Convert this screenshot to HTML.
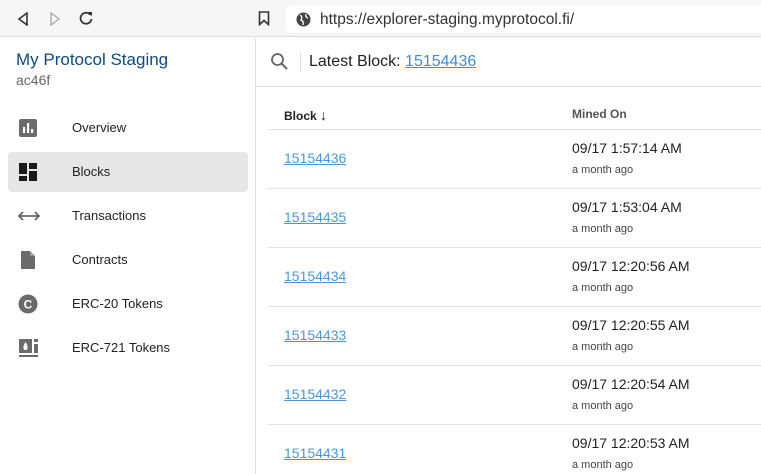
<!DOCTYPE html>
<html><head><meta charset="utf-8"><style>
*{box-sizing:border-box;margin:0;padding:0}
body{width:761px;height:474px;overflow:hidden;background:#fff;font-family:"Liberation Sans",sans-serif;position:relative;color:#222}
.bar{position:absolute;left:0;top:0;width:761px;height:37px;background:#f6f6f6;border-bottom:1px solid #dcdcdc}
.url{position:absolute;left:286px;top:5px;width:480px;height:28px;background:#fff;border-radius:6px}
.url span{position:absolute;left:34px;top:6px;font-size:15.5px;color:#333}
.side{position:absolute;left:0;top:38px;width:256px;height:436px;border-right:1px solid #e0e0e0}
.title{position:absolute;left:16px;top:12px;font-size:17px;color:#0e4a80}
.sub{position:absolute;left:16px;top:34px;font-size:14px;color:#666}
.nav{position:absolute;left:8px;width:240px;height:40px;border-radius:4px}
.nav.act{background:#e6e6e6}
.nav .t{position:absolute;left:64px;top:12px;font-size:13px;color:#222}
.nav svg{position:absolute;left:10px;top:10px}
.main{position:absolute;left:256px;top:38px;width:505px;height:436px}
.top{position:absolute;left:0;top:0;width:505px;height:49px;border-bottom:1px solid #e0e0e0}
.lb{position:absolute;left:53px;top:15px;font-size:16px;color:#222}
.lb a{color:#3d8ed6;text-decoration:underline}
.th{position:absolute;top:69px;font-size:12px;font-weight:bold;color:#222}
.line{position:absolute;left:12px;width:493px;height:1px;background:#e2e2e2}
.bn{position:absolute;left:28px;font-size:14px;color:#4a98db;text-decoration:underline}
.dt{position:absolute;left:316px;font-size:14px;color:#222}
.ago{position:absolute;left:316px;font-size:11px;color:#444}
</style></head><body>
<div class="bar">
<svg style="position:absolute;left:16px;top:12px" width="14" height="14"><path d="M11 1 L3 7 L11 13 Z" fill="none" stroke="#333" stroke-width="1.6"/></svg>
<svg style="position:absolute;left:48px;top:12px" width="14" height="14"><path d="M3 1 L11 7 L3 13 Z" fill="none" stroke="#aaa" stroke-width="1.4"/></svg>
<svg style="position:absolute;left:78px;top:10px" width="16" height="16"><path d="M12.5 5 A5.5 5.5 0 1 0 13.5 9" fill="none" stroke="#333" stroke-width="1.8"/><path d="M10 2 L14 2 L14 6 Z" fill="#333"/></svg>
<svg style="position:absolute;left:258px;top:11px" width="12" height="15"><path d="M1.5 1 H10.5 V13.5 L6 9.5 L1.5 13.5 Z" fill="none" stroke="#333" stroke-width="1.6"/></svg>
<div class="url"><svg style="position:absolute;left:10px;top:7px" width="15" height="15"><circle cx="7.5" cy="7.5" r="7" fill="#444"/><path d="M4 3 Q7 5 5 8 Q8 9 7 13 M10 2 Q9 5 12 6" stroke="#fff" stroke-width="1.3" fill="none"/></svg><span>https://explorer-staging.myprotocol.fi/</span></div>
</div>
<div class="side">
<div class="title">My Protocol Staging</div>
<div class="sub">ac46f</div>
<div class="nav" style="top:70px"><svg width="20" height="20"><rect x="1" y="1" width="18" height="18" rx="2" fill="#6b6b6b"/><rect x="5" y="9" width="2.2" height="6" fill="#fff"/><rect x="9" y="5" width="2.2" height="10" fill="#fff"/><rect x="13" y="11" width="2.2" height="4" fill="#fff"/></svg><div class="t">Overview</div></div>
<div class="nav act" style="top:114px"><svg width="20" height="20"><rect x="1" y="1" width="8" height="11" fill="#1a1a1a"/><rect x="11" y="1" width="8" height="6" fill="#1a1a1a"/><rect x="1" y="14" width="8" height="5" fill="#1a1a1a"/><rect x="11" y="9" width="8" height="10" fill="#1a1a1a"/></svg><div class="t">Blocks</div></div>
<div class="nav" style="top:158px"><svg width="22" height="20"><path d="M1 10 H21 M5 6 L1 10 L5 14 M17 6 L21 10 L17 14" stroke="#666" stroke-width="1.8" fill="none"/></svg><div class="t">Transactions</div></div>
<div class="nav" style="top:202px"><svg width="20" height="20"><path d="M3 1 H12 L17 6 V19 H3 Z" fill="#6b6b6b"/><path d="M12 1 V6 H17" fill="#999"/></svg><div class="t">Contracts</div></div>
<div class="nav" style="top:246px"><svg width="20" height="20"><circle cx="10" cy="10" r="9.5" fill="#6b6b6b"/><text x="10" y="14.5" font-size="12" font-weight="bold" fill="#fff" text-anchor="middle" font-family="Liberation Sans">C</text></svg><div class="t">ERC-20 Tokens</div></div>
<div class="nav" style="top:290px"><svg width="22" height="20"><rect x="1" y="1" width="13" height="14" fill="#6b6b6b"/><path d="M7.5 4 Q5 8 5.5 10 A2 2 0 0 0 9.5 10 Q10 8 7.5 4Z" fill="#fff"/><rect x="16" y="1" width="4" height="3" fill="#6b6b6b"/><rect x="16" y="6" width="4" height="9" fill="#6b6b6b"/><rect x="1" y="17" width="19" height="2" fill="#6b6b6b"/></svg><div class="t">ERC-721 Tokens</div></div>
</div>
<div class="main">
<div class="top">
<svg style="position:absolute;left:14px;top:14px" width="20" height="20"><circle cx="7.5" cy="7.5" r="5.5" fill="none" stroke="#666" stroke-width="1.8"/><path d="M11.5 11.5 L17 17" stroke="#666" stroke-width="2"/></svg>
<div style="position:absolute;left:44px;top:14px;width:1px;height:20px;background:#ddd"></div>
<div class="lb">Latest Block: <a>15154436</a></div>
</div>
<div class="th" style="left:28px">Block <span style="font-weight:normal;font-size:14px">↓</span></div>
<div class="th" style="left:316px;color:#555">Mined On</div>
<div class="line" style="top:91px"></div>
<div class="bn" style="top:112px">15154436</div><div class="dt" style="top:102px">09/17 1:57:14 AM</div><div class="ago" style="top:126px">a month ago</div>
<div class="line" style="top:150px"></div>
<div class="bn" style="top:171px">15154435</div><div class="dt" style="top:161px">09/17 1:53:04 AM</div><div class="ago" style="top:185px">a month ago</div>
<div class="line" style="top:209px"></div>
<div class="bn" style="top:230px">15154434</div><div class="dt" style="top:220px">09/17 12:20:56 AM</div><div class="ago" style="top:244px">a month ago</div>
<div class="line" style="top:268px"></div>
<div class="bn" style="top:289px">15154433</div><div class="dt" style="top:279px">09/17 12:20:55 AM</div><div class="ago" style="top:303px">a month ago</div>
<div class="line" style="top:327px"></div>
<div class="bn" style="top:348px">15154432</div><div class="dt" style="top:338px">09/17 12:20:54 AM</div><div class="ago" style="top:362px">a month ago</div>
<div class="line" style="top:386px"></div>
<div class="bn" style="top:407px">15154431</div><div class="dt" style="top:397px">09/17 12:20:53 AM</div><div class="ago" style="top:421px">a month ago</div>
</div>
</body></html>
